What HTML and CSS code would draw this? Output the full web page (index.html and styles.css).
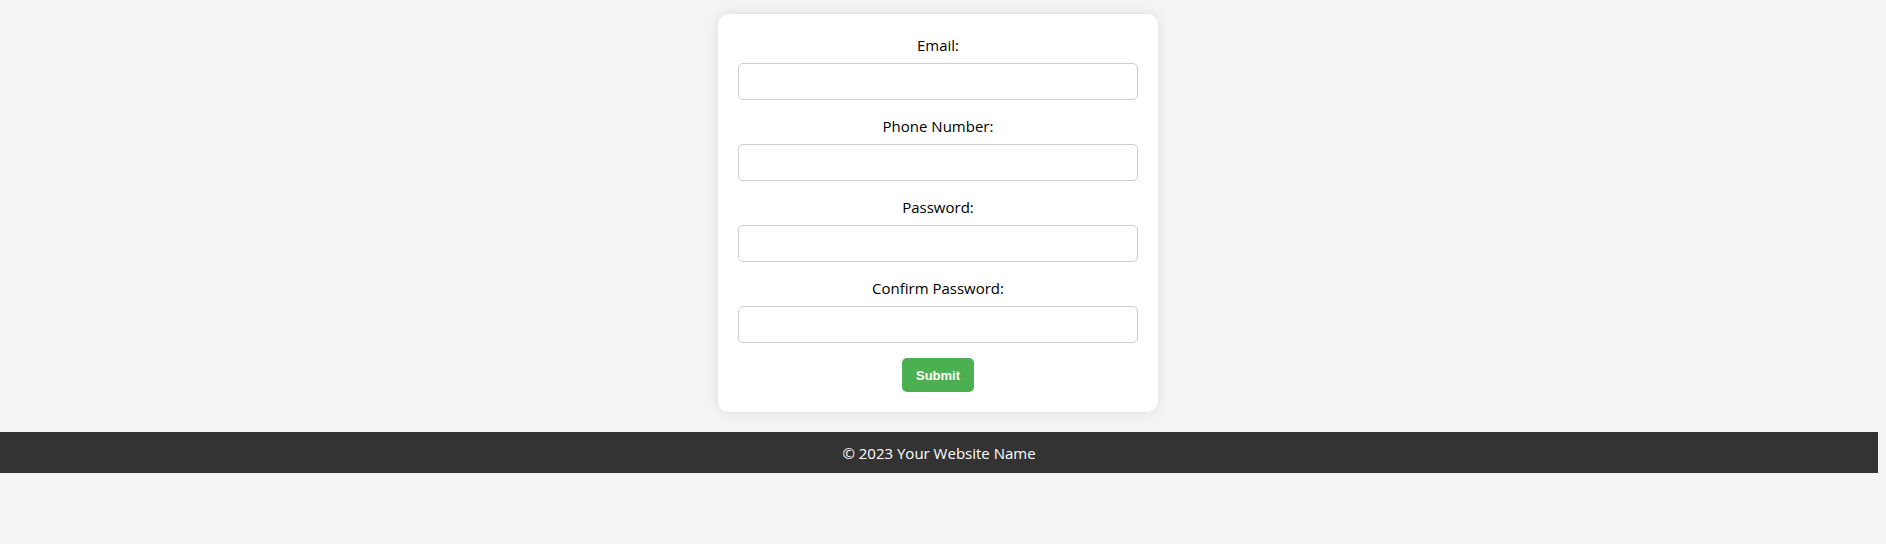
FILE: index.html
```html
<!DOCTYPE html>
<html lang="en">
<head>
<meta charset="utf-8">
<title>Sign up</title>
<link rel="stylesheet" href="styles.css">
</head>
<body>
<main class="page">
  <form class="card">
    <div class="field">
      <label class="label" for="email">Email:</label>
      <input class="input" id="email" type="email">
    </div>
    <div class="field">
      <label class="label" for="phone">Phone Number:</label>
      <input class="input" id="phone" type="tel">
    </div>
    <div class="field">
      <label class="label" for="pw">Password:</label>
      <input class="input" id="pw" type="password">
    </div>
    <div class="field">
      <label class="label" for="pw2">Confirm Password:</label>
      <input class="input" id="pw2" type="password">
    </div>
    <button class="submit" type="button">Submit</button>
  </form>
</main>
<footer class="footer">© 2023 Your Website Name</footer>
</body>
</html>
```
FILE: styles.css
```css
html {
  margin: 0;
  padding: 0;
  background: #f4f4f4;
}
body {
  margin: 0 8px 0 0;
  padding: 0;
  background: #f4f4f4;
  font-family: "Open Sans", "Liberation Sans", sans-serif;
  color: #000;
}
.page {
  display: flex;
  justify-content: center;
  padding: 14px 2px 0 0;
}
.card {
  width: 400px;
  padding: 20px;
  background: #fff;
  border-radius: 10px;
  box-shadow: 0 0 12px rgba(0, 0, 0, 0.1);
  display: flex;
  flex-direction: column;
  align-items: center;
}
.field {
  width: 100%;
  display: flex;
  flex-direction: column;
  align-items: center;
  margin-bottom: 15px;
}
.label {
  font-size: 15px;
  line-height: 22px;
  margin-bottom: 7px;
}
.input {
  box-sizing: border-box;
  width: 100%;
  height: 37px;
  margin: 0;
  border: 1px solid #ccc;
  border-radius: 5px;
  background: #fff;
  font: inherit;
}
.submit {
  width: 72px;
  height: 34px;
  border: none;
  border-radius: 5px;
  background: #4caf50;
  color: #fff;
  font-family: "Liberation Sans", Arial, sans-serif;
  font-size: 13px;
  font-weight: bold;
  padding: 0;
}
.footer {
  margin-top: 20px;
  height: 41px;
  background: #333;
  color: #fff;
  display: flex;
  align-items: center;
  justify-content: center;
  font-size: 15px;
}
```
